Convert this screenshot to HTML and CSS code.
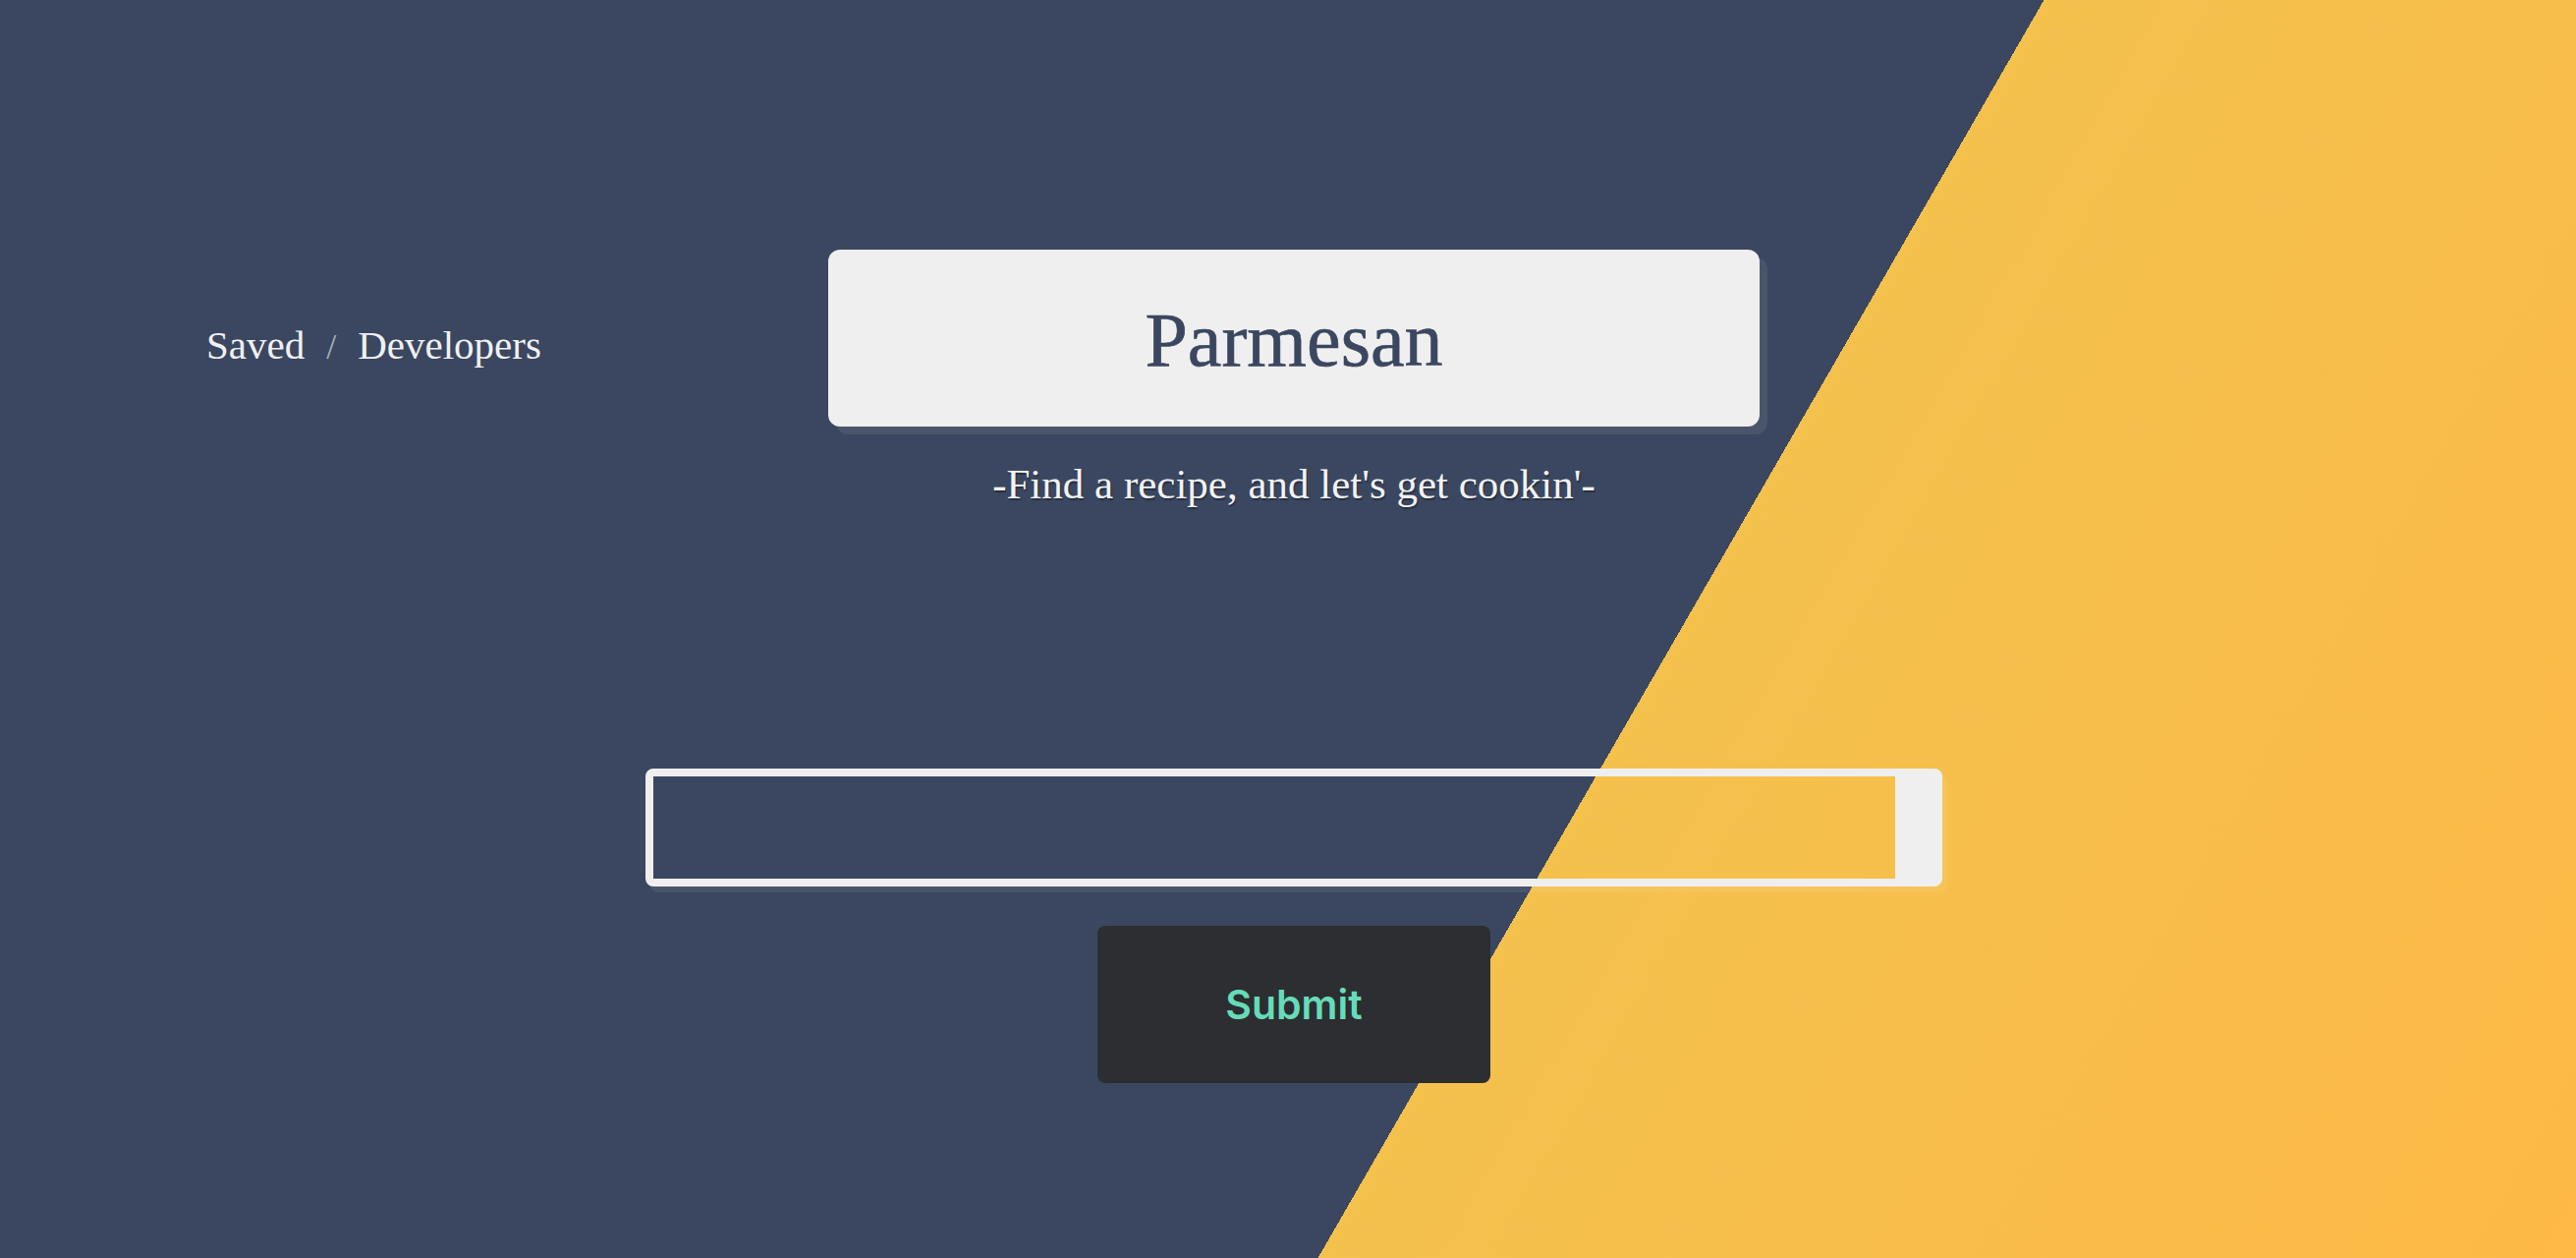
FILE: index.html
```html
<!DOCTYPE html>
<html lang="en">
<head>
    <meta charset="UTF-8">
    <meta name="viewport" content="width=device-width, initial-scale=1.0">
    <title>Parmesan</title>
    <link rel="stylesheet" href="styles.css">
</head>
<body>
    <div class="page">
        <header class="header">
            <nav class="nav">
                <a href="#" class="nav-link">Saved</a>
                <span class="nav-sep">/</span>
                <a href="#" class="nav-link">Developers</a>
            </nav>
            <div class="title-box">
                <h1>Parmesan</h1>
            </div>
            <div></div>
        </header>

        <p class="tagline">-Find a recipe, and let's get cookin'-</p>

        <form class="search" onsubmit="return false;">
            <input type="text" class="search-input" aria-label="Search recipes">
            <button type="submit" class="submit">Submit</button>
        </form>
    </div>
</body>
</html>
```

FILE: styles.css
```css
html, body {
    height: 100%;
}

body {
    margin: 0;
    font-family: 'Liberation Serif', 'Times New Roman', serif;
    color: #f0f0f0;
    background-color: #3b4760;
    background-image:
        linear-gradient(120deg, #3b4760 61.9%, transparent 61.9%),
        linear-gradient(120deg, #f4c14d 62%, #feb947 100%);
    overflow: hidden;
}

.page {
    height: 100%;
    padding-left: 12px;
    box-sizing: border-box;
    display: flex;
    flex-direction: column;
    align-items: center;
}

.header {
    width: 100%;
    display: grid;
    grid-template-columns: 1fr 948px 1fr;
    align-items: center;
    margin-top: 254px;
}

.nav {
    display: flex;
    align-items: baseline;
    gap: 22px;
    padding-left: 198px;
    padding-top: 14px;
    font-size: 41px;
}

.nav-link {
    color: #f0f0f0;
    text-decoration: none;
}

.nav-sep {
    color: #a9adb8;
    font-size: 36px;
}

.title-box {
    height: 180px;
    background-color: #efefef;
    border-radius: 12px;
    box-shadow: 8px 8px 0 rgba(255, 255, 255, 0.08);
    display: flex;
    justify-content: center;
    align-items: center;
}

.title-box h1 {
    margin: 0;
    font-size: 78px;
    font-weight: normal;
    color: #3b4760;
    padding-top: 4px;
    -webkit-text-stroke: 0.6px #3b4760;
}

.tagline {
    margin: 34px 0 0;
    font-size: 43px;
    color: #f2f2f2;
    text-shadow: 1px 2px 1px rgba(0, 0, 0, 0.35);
}

.search {
    margin-top: 265px;
    display: flex;
    flex-direction: column;
    align-items: center;
}

.search-input {
    width: 1320px;
    height: 120px;
    box-sizing: border-box;
    border: 8px solid #efefef;
    border-right-width: 48px;
    border-radius: 8px;
    background: transparent;
    box-shadow: 5px 6px 0 rgba(255, 255, 255, 0.08);
    outline: none;
    font-size: 36px;
    color: #f0f0f0;
    padding: 0 20px;
}

.submit {
    margin-top: 40px;
    width: 400px;
    height: 160px;
    border: none;
    border-radius: 8px;
    background-color: #2c2e31;
    color: #66dcb9;
    font-family: 'Inter', 'Open Sans', sans-serif;
    font-weight: 600;
    font-size: 41px;
    cursor: pointer;
}
```
